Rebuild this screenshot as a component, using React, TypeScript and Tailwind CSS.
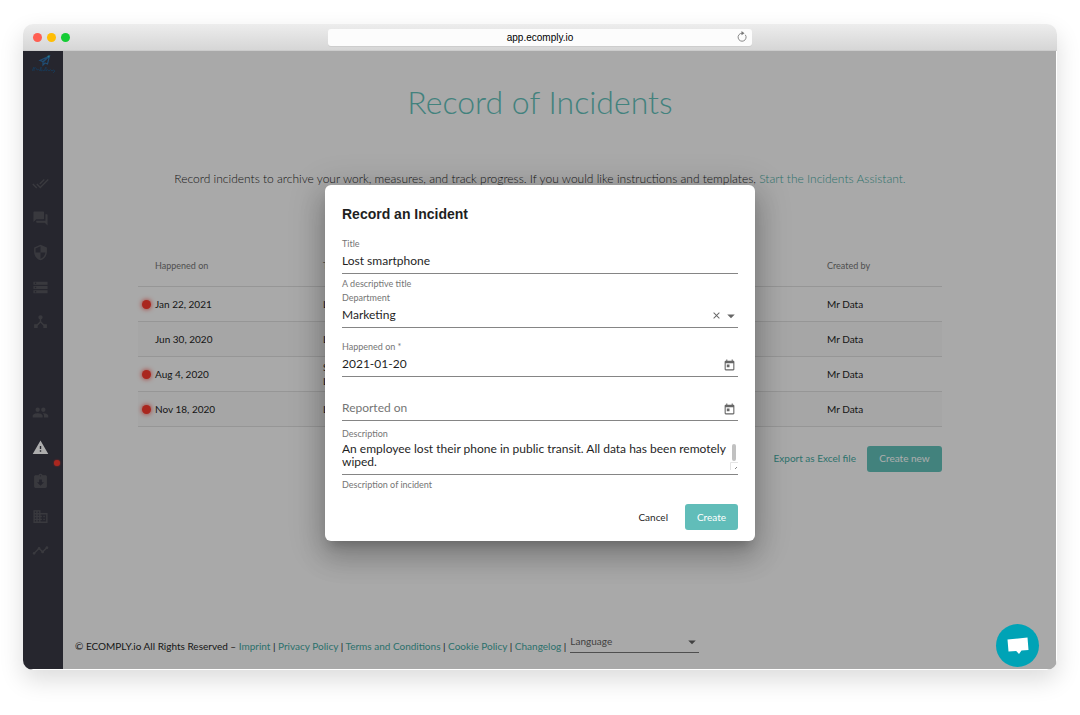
import React, { useState } from 'react';
import {
  MdArrowDropDown,
  MdAssignmentReturned,
  MdClose,
  MdDeviceHub,
  MdDoneAll,
  MdDomain,
  MdForum,
  MdPeople,
  MdSecurity,
  MdStorage,
  MdTimeline,
  MdToday,
  MdWarning,
} from 'react-icons/md';
import type { IconType } from 'react-icons';

interface NavItem {
  label: string;
  icon: IconType;
  active?: boolean;
}

const topNav: NavItem[] = [
  { label: 'Tasks', icon: MdDoneAll },
  { label: 'Messages', icon: MdForum },
  { label: 'Security', icon: MdSecurity },
  { label: 'Processing', icon: MdStorage },
  { label: 'Processors', icon: MdDeviceHub },
];

const bottomNav: NavItem[] = [
  { label: 'People', icon: MdPeople },
  { label: 'Incidents', icon: MdWarning, active: true },
  { label: 'Requests', icon: MdAssignmentReturned },
  { label: 'Company', icon: MdDomain },
  { label: 'Reports', icon: MdTimeline },
];

const incidents = [
  { date: 'Jan 22, 2021', tags: ['Loss'], author: 'Mr Data', open: true },
  { date: 'Jun 30, 2020', tags: ['Leak'], author: 'Mr Data', open: false },
  { date: 'Aug 4, 2020', tags: ['Sent', 'Loss'], author: 'Mr Data', open: true },
  { date: 'Nov 18, 2020', tags: ['Leak'], author: 'Mr Data', open: true },
];

const footerLinks = ['Imprint', 'Privacy Policy', 'Terms and Conditions', 'Cookie Policy', 'Changelog'];

const NavGroup = ({ items }: { items: NavItem[] }) => (
  <div className="flex flex-col justify-between h-[155px]">
    {items.map(({ label, icon: Icon, active }) => (
      <a
        key={label}
        href="#"
        aria-label={label}
        className={active ? 'relative block text-white' : 'relative block text-[#55555c]'}
      >
        <Icon size={17} />
        {active && (
          <span className="absolute left-[22px] top-[21px] w-1.5 h-1.5 rounded-full bg-[#f93a2f] shadow-[0_0_2px_#f93a2f]" />
        )}
      </a>
    ))}
  </div>
);

const Sidebar = () => (
  <nav className="w-10 shrink-0 bg-[#383845] pl-[9px]">
    <div className="h-[124px] pt-1">
      <svg width="28" height="20" viewBox="0 0 28 20" fill="none">
        <path d="M17.500 1 L8 5.500 L11 6.500 Z M17.500 1 L11 7 L11 10 L13 8 L15.500 9 Z" stroke="#2f72ab" strokeWidth="1.200" />
        <circle cx="16.500" cy="1.500" r="1" fill="#35b9d6" />
        <path d="M0 16 l2 -4 l0 4 M2 14 q2 -3 3 1 q2 -2 3 1 l1 -4 v4 q2 -2 3 0 l2 -4 v4 q2 -3 3 0 q1 -3 3 0 q1 -2 3 0 l-2 2" stroke="#26527a" strokeWidth="1" />
      </svg>
    </div>
    <NavGroup items={topNav} />
    <div className="h-[74px]" />
    <NavGroup items={bottomNav} />
  </nav>
);

const BrowserBar = () => (
  <div className="h-[27px] grid grid-cols-[1fr_424px_1fr] items-center bg-linear-to-b from-[#ededed] to-[#d6d6d6] border-b border-[#cccccc]">
    <div className="flex gap-[5px] pl-2.5">
      <span className="w-[9px] h-[9px] rounded-full bg-[#ff5f52]" />
      <span className="w-[9px] h-[9px] rounded-full bg-[#ffbe05]" />
      <span className="w-[9px] h-[9px] rounded-full bg-[#15cc35]" />
    </div>
    <div className="h-[17px] flex items-center rounded-[3px] bg-[#fcfcfc] shadow-[0_1px_0_#cdcdcd] px-1">
      <span className="w-3" />
      <span className="flex-1 pt-0.5 text-center text-[10px] leading-4 text-black font-['Liberation_Sans',sans-serif]">
        app.ecomply.io
      </span>
      <svg width="12" height="12" viewBox="0 0 12 12" fill="none">
        <path d="M9.300 3.800 A4 4 0 1 1 6 2.200" stroke="#888" strokeWidth="1" />
        <path d="M5.500 0 L8.500 2.200 L5.500 4.300 Z" fill="#777" />
      </svg>
    </div>
  </div>
);

const IncidentTable = () => (
  <table className="w-full table-fixed text-left text-[10px] leading-[14px] text-[#1f1f1f]">
    <colgroup>
      <col className="w-[168px]" />
      <col />
      <col className="w-[132px]" />
    </colgroup>
    <thead>
      <tr className="h-[41px] border-b border-[#dedede] text-[9px] text-[#757575]">
        <th className="pl-[17px] pt-0.5 font-normal">Happened on</th>
        <th className="pl-[17px] pt-0.5 font-normal">Title</th>
        <th className="pl-[17px] pt-0.5 font-normal">Created by</th>
      </tr>
    </thead>
    <tbody>
      {incidents.map((row) => (
        <tr key={row.date} className="h-[35px] border-b border-[#dedede] even:bg-[#f5f5f5]">
          <td className="relative pl-[17px]">
            {row.open && (
              <span className="absolute left-1 top-[13px] w-[9px] h-[9px] rounded-full bg-[#f93a2f] shadow-[0_0_5px_#f93a2f]" />
            )}
            {row.date}
          </td>
          <td className="pl-[17px]">
            {row.tags.map((tag) => (
              <div key={tag}>{tag}</div>
            ))}
          </td>
          <td className="pl-[17px]">{row.author}</td>
        </tr>
      ))}
    </tbody>
  </table>
);

const Footer = () => (
  <footer className="mt-auto flex items-center pl-3 h-12 text-[10px] text-[#1f1f1f]">
    <p className="whitespace-nowrap">
      © ECOMPLY.io All Rights Reserved –{' '}
      {footerLinks.map((link) => (
        <React.Fragment key={link}>
          <a href="#" className="text-[#3fa79f]">{link}</a>
          {' | '}
        </React.Fragment>
      ))}
    </p>
    <div className="ml-1 mb-2 w-[129px] flex items-center border-b border-[#757575] text-[#616161]">
      <select aria-label="Language" className="flex-1 h-5 appearance-none bg-transparent outline-none">
        <option>Language</option>
      </select>
      <MdArrowDropDown size={18} className="-mr-0.5" />
    </div>
  </footer>
);

const labelClass = 'block h-3 text-[9px] leading-3 text-[#757575]';
const rowClass = 'flex items-center border-b border-[#858585] text-[#666666]';
const inputClass =
  'flex-1 min-w-0 h-[23px] pb-0.5 bg-transparent outline-none text-xs text-[#1f1f1f] placeholder:text-[#757575] placeholder:opacity-100';

const IncidentDialog = () => {
  const [title, setTitle] = useState('Lost smartphone');
  const [department, setDepartment] = useState('Marketing');
  const [happenedOn, setHappenedOn] = useState('2021-01-20');
  const [reportedOn, setReportedOn] = useState('');
  const [description, setDescription] = useState(
    'An employee lost their phone in public transit. All data has been remotely wiped.'
  );

  return (
    <form
      role="dialog"
      aria-labelledby="dialog-title"
      onSubmit={(e) => e.preventDefault()}
      className="w-[430px] rounded-md bg-white px-[17px] pt-[19px] pb-[11px] shadow-[0_8px_11px_-5px_rgba(0,0,0,0.2),0_17px_27px_2px_rgba(0,0,0,0.14),0_6px_33px_6px_rgba(0,0,0,0.16)]"
    >
      <h2 id="dialog-title" className="text-sm leading-5 font-bold text-[#1f1f1f] font-['Liberation_Sans',sans-serif]">
        Record an Incident
      </h2>

      <div className="mt-3.5">
        <label htmlFor="title" className={labelClass}>Title</label>
        <div className={rowClass}>
          <input id="title" className={inputClass} value={title} onChange={(e) => setTitle(e.target.value)} />
        </div>
        <p className="mt-1 h-3 text-[9px] leading-3 text-[#757575]">A descriptive title</p>
      </div>

      <div className="mt-0.5">
        <label htmlFor="department" className={labelClass}>Department</label>
        <div className={rowClass}>
          <select
            id="department"
            className={`${inputClass} appearance-none`}
            value={department}
            onChange={(e) => setDepartment(e.target.value)}
          >
            <option value=""></option>
            <option>Marketing</option>
          </select>
          <button type="button" aria-label="Clear department" onClick={() => setDepartment('')}>
            <MdClose size={11} />
          </button>
          <MdArrowDropDown size={18} className="-mr-0.5" />
        </div>
      </div>

      <div className="mt-[13px]">
        <label htmlFor="happened" className={labelClass}>Happened on *</label>
        <div className={rowClass}>
          <input id="happened" className={inputClass} value={happenedOn} onChange={(e) => setHappenedOn(e.target.value)} />
          <button type="button" aria-label="Open calendar" className="mr-0.5 pt-0.5">
            <MdToday size={13} />
          </button>
        </div>
      </div>

      <div className={`mt-5 ${rowClass}`}>
        <input
          aria-label="Reported on"
          placeholder="Reported on"
          className={inputClass}
          value={reportedOn}
          onChange={(e) => setReportedOn(e.target.value)}
        />
        <button type="button" aria-label="Open calendar" className="mr-0.5 pt-0.5">
          <MdToday size={13} />
        </button>
      </div>

      <div className="mt-[7px]">
        <label htmlFor="description" className={labelClass}>Description</label>
        <div className={rowClass}>
          <textarea
            id="description"
            className="flex-1 h-[34px] pt-0.5 resize-none overflow-hidden bg-transparent outline-none text-xs leading-[13px] text-[#1f1f1f]"
            value={description}
            onChange={(e) => setDescription(e.target.value)}
          />
          {/* Scroll thumb and resize corner */}
          <div className="w-2 flex flex-col items-center gap-px">
            <span className="w-1 h-[17px] rounded-full bg-[#c1c1c1]" />
            <svg width="8" height="8" viewBox="0 0 8 8" fill="none">
              <path d="M0.500 8 V0.500 H8" stroke="#e4e4e4" />
              <path d="M5 7 L7 5" stroke="#888" />
            </svg>
          </div>
        </div>
        <p className="mt-1 h-3 text-[9px] leading-3 text-[#757575]">Description of incident</p>
      </div>

      <div className="mt-[13px] flex justify-end gap-[5px] text-[10px]">
        <button type="button" className="h-[26px] px-3 text-[#1f1f1f]">Cancel</button>
        <button type="submit" className="h-[26px] w-[53px] rounded-[3px] bg-[#61bdb9] text-white">Create</button>
      </div>
    </form>
  );
};

export default function App() {
  return (
    <div className="min-h-screen flex flex-col bg-white px-[23px] pt-6 pb-[45px] font-['Lato',sans-serif]">
      <div className="relative flex-1 flex flex-col rounded-[10px] overflow-hidden shadow-[0_10px_24px_rgba(0,0,0,0.14)]">
        <BrowserBar />

        <div className="relative flex-1 flex bg-[#f9f9f9]">
          <Sidebar />

          <main className="flex-1 flex flex-col">
            <div className="pr-10">
              <h1 className="pt-[31px] text-center text-[32px] leading-10 font-light text-[#62c0b9]">Record of Incidents</h1>
              <p className="mt-[49px] text-center text-xs leading-4 font-light text-[#1f1f1f]">
                Record incidents to archive your work, measures, and track progress. If you would like instructions and
                templates, <a href="#" className="text-[#45aaa1]">Start the Incidents Assistant.</a>
              </p>

              <div className="mt-[58px] mx-auto max-w-[804px]">
                <IncidentTable />
                <div className="mt-[19px] flex justify-end items-center gap-[11px] text-[10px]">
                  <a href="#" className="text-[#45aaa1]">Export as Excel file</a>
                  <button type="button" className="h-[26px] w-[75px] rounded-[3px] bg-[#62c0b9] text-white">
                    Create new
                  </button>
                </div>
              </div>
            </div>
            <Footer />
          </main>

          {/* Backdrop */}
          <div className="absolute inset-0 flex items-center justify-center pt-1.5 pl-px bg-black/32 border-r border-b border-white">
            <IncidentDialog />
          </div>

          <button
            type="button"
            aria-label="Open chat"
            className="absolute right-[18px] bottom-[3px] w-[43px] h-[43px] rounded-full bg-[#00a3b6] flex items-center justify-center"
          >
            <svg width="22" height="18" viewBox="0 0 22 18" fill="#fff">
              <path d="M0.500 2.500 L20.500 0.500 L21.500 13 L14.500 13.600 L12 17 L9.200 14 L1.500 14.500 Z" />
            </svg>
          </button>
        </div>
      </div>
    </div>
  );
}
